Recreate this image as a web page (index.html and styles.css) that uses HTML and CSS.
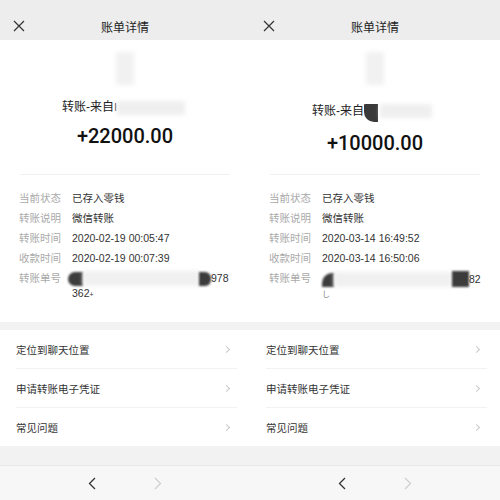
FILE: index.html
```html
<!DOCTYPE html>
<html lang="zh-CN">
  <head>
    <meta charset="UTF-8" />
    <meta name="viewport" content="width=device-width, initial-scale=1.0" />
    <title>账单详情</title>
    <link rel="stylesheet" href="styles.css">
  </head>
  <body>
    <div class="screens">
      <!-- 第一张 -->
      <section class="screen">
        <header class="nav">
          <svg class="close" width="12" height="12" viewBox="0 0 12 12"><path d="M1 1L11 11M11 1L1 11" /></svg>
          <h1>账单详情</h1>
        </header>
        <div class="summary">
          <div class="avatar"></div>
          <div class="from">转账-来自<span class="cursor">I</span><span class="blur-name"></span></div>
          <div class="amount">+22000.00</div>
        </div>
        <div class="details">
          <div class="row"><span class="label">当前状态</span><span class="value">已存入零钱</span></div>
          <div class="row"><span class="label">转账说明</span><span class="value">微信转账</span></div>
          <div class="row"><span class="label">转账时间</span><span class="value">2020-02-19 00:05:47</span></div>
          <div class="row"><span class="label">收款时间</span><span class="value">2020-02-19 00:07:39</span></div>
          <div class="row">
            <span class="label">转账单号</span>
            <span class="value">
              <span class="masked">
                <span class="blob blob-round"></span><span class="smear"></span><span class="blob blob-end"></span>978
              </span>
              <span class="wrap">362<small>+</small></span>
            </span>
          </div>
        </div>
        <div class="links">
          <div class="link">定位到聊天位置<span class="chev"></span></div>
          <div class="link">申请转账电子凭证<span class="chev"></span></div>
          <div class="link">常见问题<span class="chev"></span></div>
        </div>
        <div class="spacer"></div>
        <footer class="toolbar">
          <svg class="arrow" width="8" height="13" viewBox="0 0 8 13"><path d="M7 1L1.5 6.5L7 12" /></svg>
          <svg class="arrow off" width="8" height="13" viewBox="0 0 8 13"><path d="M1 1L6.5 6.5L1 12" /></svg>
        </footer>
      </section>

      <!-- 第二张 -->
      <section class="screen">
        <header class="nav">
          <svg class="close" width="12" height="12" viewBox="0 0 12 12"><path d="M1 1L11 11M11 1L1 11" /></svg>
          <h1>账单详情</h1>
        </header>
        <div class="summary">
          <div class="avatar"></div>
          <div class="from">转账-来自<span class="blob-name"></span><span class="blur-name short"></span></div>
          <div class="amount">+10000.00</div>
        </div>
        <div class="details">
          <div class="row"><span class="label">当前状态</span><span class="value">已存入零钱</span></div>
          <div class="row"><span class="label">转账说明</span><span class="value">微信转账</span></div>
          <div class="row"><span class="label">转账时间</span><span class="value">2020-03-14 16:49:52</span></div>
          <div class="row"><span class="label">收款时间</span><span class="value">2020-03-14 16:50:06</span></div>
          <div class="row">
            <span class="label">转账单号</span>
            <span class="value">
              <span class="masked">
                <span class="blob blob-half"></span><span class="smear wide"></span><span class="blob blob-square"></span>82
              </span>
              <span class="wrap faint">し</span>
            </span>
          </div>
        </div>
        <div class="links">
          <div class="link">定位到聊天位置<span class="chev"></span></div>
          <div class="link">申请转账电子凭证<span class="chev"></span></div>
          <div class="link">常见问题<span class="chev"></span></div>
        </div>
        <div class="spacer"></div>
        <footer class="toolbar">
          <svg class="arrow" width="8" height="13" viewBox="0 0 8 13"><path d="M7 1L1.5 6.5L7 12" /></svg>
          <svg class="arrow off" width="8" height="13" viewBox="0 0 8 13"><path d="M1 1L6.5 6.5L1 12" /></svg>
        </footer>
      </section>
    </div>
  </body>
</html>
```

FILE: styles.css
```css
/* General styles */
body {
  margin: 0;
  font-family: "Liberation Sans", "Noto Sans CJK SC", sans-serif;
  background-color: #f2f2f2;
  color: #222;
  overflow: hidden;
}

.screens {
  display: flex;
  width: 500px;
  height: 500px;
}

.screen {
  width: 250px;
  height: 500px;
  display: flex;
  flex-direction: column;
  background-color: #f2f2f2;
}

/* 상단 바 */
.nav {
  height: 40px;
  background-color: #ededed;
  display: flex;
  align-items: center;
  justify-content: center;
  position: relative;
  padding-top: 12px;
  box-sizing: border-box;
}

.nav h1 {
  margin: 0;
  font-size: 12px;
  font-weight: normal;
  color: #222;
}

.close {
  position: absolute;
  left: 13px;
  top: 20px;
  fill: none;
  stroke: #333;
  stroke-width: 1.2;
}

/* 金额 */
.summary {
  background-color: #fff;
  padding: 12px 20px 0;
  height: 135px;
  box-sizing: border-box;
  display: flex;
  flex-direction: column;
  align-items: center;
}

.summary::after {
  content: "";
  display: block;
  width: 210px;
  height: 1px;
  margin-top: auto;
  background-color: #f0f0f0;
}

.avatar {
  width: 18px;
  height: 33px;
  background-color: #f1f1f1;
  filter: blur(2px);
}

.from {
  margin-top: 15px;
  margin-left: 18px;
  align-self: flex-start;
  padding-left: 24px;
  font-size: 12px;
  line-height: 15px;
  color: #222;
  display: flex;
  align-items: center;
}

.cursor {
  font-size: 11px;
  color: #444;
}

.blur-name {
  display: inline-block;
  width: 68px;
  height: 14px;
  background-color: #efefef;
  filter: blur(2px);
}

.blur-name.short {
  width: 52px;
  margin-left: 2px;
}

.blob-name {
  display: inline-block;
  width: 14px;
  height: 18px;
  margin-top: 4px;
  background-color: #3a3a3a;
  border-radius: 1px 0 0 10px;
  filter: blur(0.6px);
}

.amount {
  margin-top: 9px;
  font-family: Roboto, "Liberation Sans", sans-serif;
  font-weight: 500;
  font-size: 20px;
  color: #111;
}

/* 明细 */
.details {
  background-color: #fff;
  padding: 16px 20px 20px 19px;
  height: 147px;
  box-sizing: border-box;
  display: flex;
  flex-direction: column;
  gap: 5px;
  font-size: 10.5px;
  line-height: 15px;
}

.row {
  display: flex;
}

.label {
  width: 53px;
  flex-shrink: 0;
  color: #aaa;
}

.value {
  color: #333;
  display: flex;
  flex-direction: column;
}

.masked {
  display: flex;
  align-items: center;
}

.blob {
  display: inline-block;
  height: 14px;
  background-color: #3c3c3c;
  filter: blur(0.8px);
}

.blob-round {
  width: 15px;
  border-radius: 8px 0 0 8px;
  margin-left: -4px;
}

.blob-half {
  width: 12px;
  border-radius: 10px 0 0 0;
  margin-top: 2px;
}

.blob-end {
  width: 12px;
  border-radius: 0 6px 6px 0;
}

.blob-square {
  width: 17px;
  height: 16px;
}

.smear {
  display: inline-block;
  width: 116px;
  height: 15px;
  background-color: #f0f0f0;
  filter: blur(2px);
}

.smear.wide {
  width: 118px;
}

.wrap small {
  font-size: 7px;
}

.wrap.faint {
  color: #888;
  font-size: 8px;
}

/* 链接 */
.links {
  margin-top: 8px;
  background-color: #fff;
}

.link {
  height: 38px;
  margin-left: 16px;
  margin-right: 13px;
  display: flex;
  align-items: center;
  justify-content: space-between;
  font-size: 10.5px;
  color: #333;
  border-bottom: 1px solid #f2f2f2;
}

.link:last-child {
  border-bottom: none;
}

.chev {
  width: 4px;
  height: 4px;
  margin-right: 8px;
  border: solid #c8c8c8;
  border-width: 1px 1px 0 0;
  transform: rotate(45deg);
}

.spacer {
  flex: 1;
  background-color: #f2f2f2;
}

/* 하단 바 */
.toolbar {
  height: 34px;
  border-top: 1px solid #e8e8e8;
  background-color: #f7f7f7;
  display: flex;
  align-items: center;
  justify-content: center;
  gap: 58px;
}

.arrow {
  fill: none;
  stroke: #333;
  stroke-width: 1.3;
}

.arrow.off {
  stroke: #cfcfcf;
}
```
